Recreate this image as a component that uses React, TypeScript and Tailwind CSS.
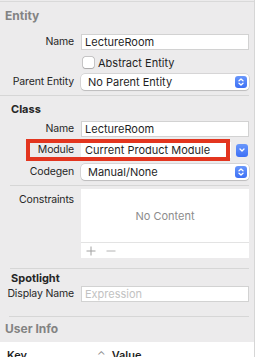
import React from "react";

const font = { fontFamily: 'Inter, "Noto Sans", sans-serif' };

function Stepper() {
  return (
    <div className="w-[12px] h-[12px] rounded-[3px] bg-gradient-to-b from-[#6a97fb] to-[#3d6ff5] flex items-center justify-center">
      <svg width="8" height="10" viewBox="0 0 8 10" fill="none" stroke="white" strokeWidth="1.3" strokeLinecap="round" strokeLinejoin="round">
        <path d="M2 3.8 L4 2 L6 3.8" />
        <path d="M2 6.2 L4 8 L6 6.2" />
      </svg>
    </div>
  );
}

function DownButton() {
  return (
    <div className="w-[12px] h-[13px] rounded-[3px] bg-gradient-to-b from-[#6a97fb] to-[#3d6ff5] flex items-center justify-center">
      <svg width="8" height="8" viewBox="0 0 8 8" fill="none" stroke="white" strokeWidth="1.3" strokeLinecap="round" strokeLinejoin="round">
        <path d="M2 3 L4 5 L6 3" />
      </svg>
    </div>
  );
}

const labelCls = "w-[74px] text-right text-[10.5px] tracking-[-0.15px] leading-[14px] text-[#262626] whitespace-nowrap";

function Row({ label, children, className = "" }: { label: string; children: React.ReactNode; className?: string }) {
  return (
    <div className={"flex items-center " + className}>
      <div className={labelCls}>{label}</div>
      <div className="ml-[7px] w-[168px]">{children}</div>
    </div>
  );
}

function TextField({ value, placeholder }: { value?: string; placeholder?: string }) {
  return (
    <div className="h-[16px] bg-white border border-[#d2d2d2] pl-[3px] flex items-center text-[11px] leading-[14px]">
      {value ? <span className="text-[#1f1f1f]">{value}</span> : <span className="text-[#c2c2c2]">{placeholder}</span>}
    </div>
  );
}

function Popup({ value }: { value: string }) {
  return (
    <div className="h-[16px] rounded-[4px] bg-white shadow-[0_0_0_0.5px_rgba(0,0,0,0.18),0_1px_1px_rgba(0,0,0,0.12)] flex items-center justify-between pl-[7px] pr-[2px] text-[11px] leading-[14px] text-[#1f1f1f]">
      <span>{value}</span>
      <Stepper />
    </div>
  );
}

export default function App() {
  return (
    <div style={font} className="relative w-[255px] h-[357px] overflow-hidden bg-[#ecebec] border-r border-[#d6d6d6]">
      <div className="h-[1px]" />
      <div className="h-[1px] bg-[#d9d9d9]" />
      {/* Entity */}
      <div className="h-[32px] pl-[5px] pt-[7px] text-[12px] leading-[14px] font-bold text-[#838383]">Entity</div>
      <Row label="Name">
        <TextField value="LectureRoom" />
      </Row>
      <div className="mt-[7px] h-[11px] flex items-center pl-[83px]">
        <div className="w-[11px] h-[11px] rounded-[2px] bg-white shadow-[0_0_0_0.5px_rgba(0,0,0,0.3),0_0.5px_1px_rgba(0,0,0,0.15)]" />
        <span className="ml-[4px] text-[11px] leading-[14px] text-[#1f1f1f]">Abstract Entity</span>
      </div>
      <Row label="Parent Entity" className="mt-[6px]">
        <Popup value="No Parent Entity" />
      </Row>
      <div className="mt-[5px] h-[1px] w-[249px] bg-[#d6d6d6]" />
      {/* Class */}
      <div className="h-[25px] pl-[11px] pt-[7px] text-[11px] leading-[13px] font-bold text-[#262626]">Class</div>
      <Row label="Name">
        <TextField value="LectureRoom" />
      </Row>
      <div className="relative mt-[2px] h-[22px] flex items-center">
        <div className={labelCls}>Module</div>
        <div className="ml-[7px] w-[168px] flex items-center justify-between">
          <div className="h-[16px] w-[150px] bg-white flex items-center pl-[4px] text-[11px] leading-[14px] text-[#1f1f1f]">Current Product Module</div>
          <div className="mr-[1px]">
            <DownButton />
          </div>
        </div>
        <div className="absolute left-[26px] top-0 w-[204px] h-[22px] border-[4px] border-[#e3351f]" />
      </div>
      <Row label="Codegen" className="mt-[3px]">
        <Popup value="Manual/None" />
      </Row>
      <div className="mt-[5px] ml-[10px] h-[1px] w-[239px] bg-[#d6d6d6]" />
      {/* Constraints */}
      <div className="mt-[3px] flex items-start">
        <div className={labelCls + " pt-[4px]"}>Constraints</div>
        <div className="ml-[7px] w-[168px] h-[69px] bg-white flex flex-col">
          <div className="h-[53px] flex items-center justify-center text-[11px] leading-[14px] text-[#8c8c8c]">No Content</div>
          <div className="h-[1px] bg-[#e3e3e3]" />
          <div className="flex-1 flex items-center pl-[5px]">
            <svg width="10" height="10" viewBox="0 0 10 10" stroke="#a0a0a0" strokeWidth="1">
              <path d="M5 0.5 V9.5 M0.5 5 H9.5" />
            </svg>
            <svg className="ml-[10px]" width="10" height="10" viewBox="0 0 10 10" stroke="#b4b4b4" strokeWidth="1">
              <path d="M0.5 5 H9.5" />
            </svg>
          </div>
        </div>
      </div>
      <div className="mt-[10px] ml-[10px] h-[1px] w-[239px] bg-[#d6d6d6]" />
      {/* Spotlight */}
      <div className="h-[17px] pl-[11px] pt-[3px] text-[11px] leading-[13px] font-bold text-[#262626]">Spotlight</div>
      <Row label="Display Name">
        <TextField placeholder="Expression" />
      </Row>
      <div className="mt-[14px] ml-[9px] h-[1px] w-[240px] bg-[#d6d6d6]" />
      {/* User Info */}
      <div className="h-[25px] pl-[5px] pt-[5px] text-[12px] leading-[14px] font-bold text-[#838383]">User Info</div>
      <div className="h-[20px] bg-white flex items-start pt-[6px] text-[11px] leading-[14px] font-semibold text-[#1f1f1f]">
        <span className="ml-[7px]">Key</span>
        <span className="ml-[70px] text-[#8c8c8c] font-normal">⌃</span>
        <span className="ml-[6px]">Value</span>
      </div>
    </div>
  );
}
